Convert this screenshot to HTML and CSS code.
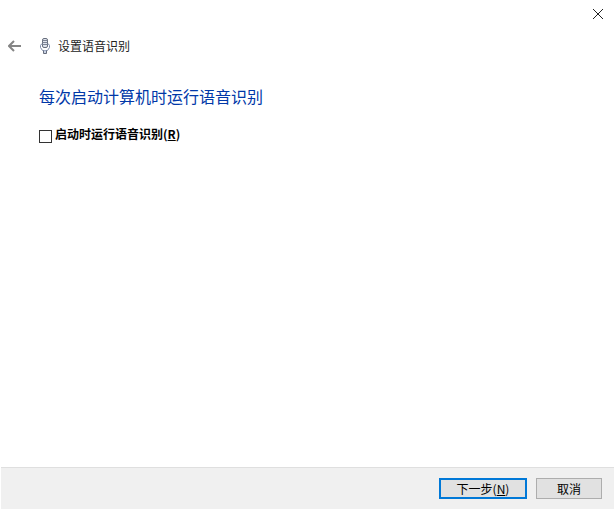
FILE: index.html
```html
<!DOCTYPE html>
<html lang="zh-CN">
<head>
    <meta charset="UTF-8">
    <title>设置语音识别</title>
    <link rel="stylesheet" href="styles.css">
</head>
<body>
    <div class="window">
        <div class="titlebar">
            <svg class="close-icon" width="12" height="12" viewBox="0 0 12 12">
                <path d="M1 1 L11 11 M11 1 L1 11" stroke="#222" stroke-width="1" fill="none"/>
            </svg>
        </div>
        <div class="nav">
            <svg class="back-icon" width="14" height="12" viewBox="0 0 14 12">
                <path d="M1 6 H13 M6 1 L1 6 L6 11" stroke="#858585" stroke-width="2" fill="none"/>
            </svg>
            <svg class="mic-icon" width="10" height="16" viewBox="0 0 10 16">
                <rect x="2.5" y="0.5" width="5" height="9" rx="1.5" fill="#dfe4ee" stroke="#666d7c"/>
                <path d="M2.5 2.5 H7.5 M2.5 4.5 H7.5 M2.5 6.5 H7.5" stroke="#7d8494" fill="none"/>
                <path d="M2.5 6 H1.5 L0.5 7.5 V9.5 L2.5 12.5 H7.5 L9.5 9.5 V7.5 L8.5 6 H7.5" stroke="#7f8cab" fill="none"/>
                <path d="M3.5 12.5 V15.5 H6.5 V12.5" stroke="#666d7c" fill="#c9d2e4"/>
            </svg>
            <span class="nav-title">设置语音识别</span>
        </div>
        <div class="content">
            <h1 class="heading">每次启动计算机时运行语音识别</h1>
            <label class="check-row">
                <span class="checkbox"></span>
                <span class="check-label">启动时运行语音识别(<u>R</u>)</span>
            </label>
        </div>
        <div class="footer">
            <button class="btn btn-default">下一步(<u>N</u>)</button>
            <button class="btn btn-cancel">取消</button>
        </div>
    </div>
</body>
</html>
```

FILE: styles.css
```css
html, body {
    margin: 0;
    padding: 0;
    background-color: #fff;
}

.window {
    width: 614px;
    height: 509px;
    display: flex;
    flex-direction: column;
    font-family: "Noto Sans CJK SC", "Liberation Sans", sans-serif;
    font-size: 12px;
    color: #000;
    overflow: hidden;
}

.titlebar {
    height: 30px;
    display: flex;
    justify-content: flex-end;
    padding: 8px 10px 0 0;
    box-sizing: border-box;
}

.nav {
    height: 32px;
    display: flex;
    align-items: center;
    padding-left: 8px;
}

.back-icon {
    margin-right: 18px;
}

.mic-icon {
    margin-right: 8px;
}

.nav-title {
    color: #222;
    line-height: 16px;
}

.content {
    flex: 1;
    padding: 0 0 0 39px;
}

.heading {
    margin: 23px 0 0;
    font-size: 16px;
    font-weight: normal;
    line-height: 22px;
    color: #0038a8;
}

.check-row {
    display: flex;
    align-items: flex-start;
    margin-top: 19px;
}

.checkbox {
    width: 11px;
    height: 11px;
    border: 1px solid #333;
    background-color: #fff;
    margin: 4px 3px 0 0;
}

.check-label {
    font-weight: bold;
    line-height: 16px;
}

.footer {
    height: 42px;
    margin-left: 1px;
    box-sizing: border-box;
    border-top: 1px solid #dfdfdf;
    background-color: #f0f0f0;
    display: flex;
    justify-content: flex-end;
    align-items: center;
    gap: 9px;
    padding-right: 12px;
}

.btn {
    height: 21px;
    padding: 0;
    box-sizing: border-box;
    font-family: inherit;
    font-size: 12px;
    line-height: 15px;
    color: #000;
    background-color: #e1e1e1;
    border: 1px solid #adadad;
}

.btn-default {
    width: 88px;
    border: 2px solid #0078d7;
}

.btn-cancel {
    width: 66px;
}
```
